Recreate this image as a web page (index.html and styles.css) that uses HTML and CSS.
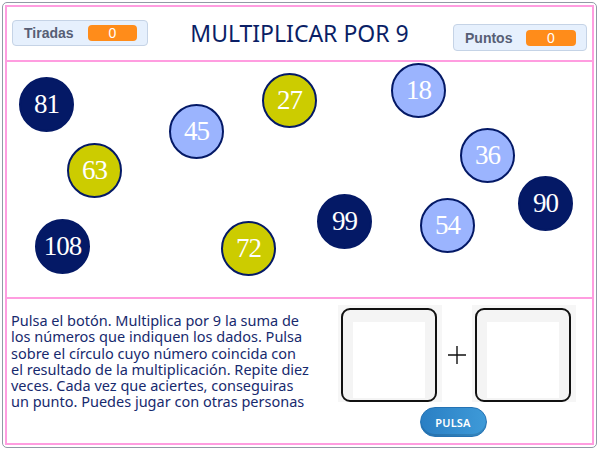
FILE: index.html
```
<!DOCTYPE html>
<html lang="es">
<head>
<meta charset="utf-8">
<title>Multiplicar por 9</title>
<link rel="stylesheet" href="styles.css">
</head>
<body>
<div class="frame">
  <div class="inner">
    <header class="header">
      <div class="monitor monitor-left">
        <span class="monitor-label">Tiradas</span>
        <span class="monitor-value">0</span>
      </div>
      <h1 class="title">MULTIPLICAR POR 9</h1>
      <div class="monitor monitor-right">
        <span class="monitor-label">Puntos</span>
        <span class="monitor-value">0</span>
      </div>
    </header>
    <section class="board">
      <div class="ball dark" style="left:12px;top:15px">81</div>
      <div class="ball yellow" style="left:60px;top:81px">63</div>
      <div class="ball light" style="left:162px;top:42px">45</div>
      <div class="ball yellow" style="left:255px;top:11px">27</div>
      <div class="ball dark" style="left:28px;top:157px">108</div>
      <div class="ball yellow" style="left:214px;top:159px">72</div>
      <div class="ball light" style="left:384px;top:1px">18</div>
      <div class="ball light" style="left:453px;top:66px">36</div>
      <div class="ball dark" style="left:511px;top:114px">90</div>
      <div class="ball dark" style="left:310px;top:132px">99</div>
      <div class="ball light" style="left:413px;top:136px">54</div>
    </section>
    <section class="bottom">
      <p class="instructions">Pulsa el botón. Multiplica por 9 la suma de<br>los números que indiquen los dados. Pulsa<br>sobre el círculo cuyo número coincida con<br>el resultado de la multiplicación. Repite diez<br>veces. Cada vez que aciertes, conseguiras<br>un punto. Puedes jugar con otras personas</p>
      <div class="play">
        <div class="dice-row">
          <div class="die"><div class="die-face"><div class="die-inner"></div></div></div>
          <svg class="plus" width="20" height="20" viewBox="0 0 20 20"><path d="M10 1V19M1 10H19" stroke="#111" stroke-width="1.4" fill="none"/></svg>
          <div class="die"><div class="die-face"><div class="die-inner"></div></div></div>
        </div>
        <button class="pulsa">PULSA</button>
      </div>
    </section>
  </div>
</div>
</body>
</html>
```
FILE: styles.css
```
* { box-sizing: border-box; }
html, body { margin: 0; padding: 0; background: #ffffff; }
body { width: 600px; height: 451px; overflow: hidden; font-family: "Noto Sans", sans-serif; }

.frame {
  margin: 2px 0 0 2px;
  width: 595px;
  height: 446px;
  border: 1px solid #9299a6;
  border-radius: 5px;
  padding: 2px;
}
.inner {
  width: 100%;
  height: 100%;
  border: 2px solid #ff9de0;
  display: flex;
  flex-direction: column;
}

.header {
  height: 55px;
  flex: none;
  border-bottom: 2px solid #ff9de0;
  display: grid;
  grid-template-columns: 1fr auto 1fr;
  align-items: start;
}
.monitor {
  display: flex;
  align-items: center;
  justify-content: space-between;
  background: #e6f0fd;
  border: 1px solid #c5d3e6;
  border-radius: 4px;
  padding: 0 10px 0 11px;
  font-family: "Liberation Sans", Arial, sans-serif;
}
.monitor-left { justify-self: start; margin: 13px 0 0 5px; width: 136px; height: 26px; }
.monitor-right { justify-self: end; margin: 17px 5px 0 0; width: 134px; height: 27px; }
.monitor-label { font-weight: bold; font-size: 14px; color: #575e75; }
.monitor-value {
  background: #ff8c1a;
  color: #ffffff;
  border-radius: 4px;
  height: 16px;
  line-height: 16px;
  text-align: center;
  font-size: 14px;
  width: 49px;
}
.monitor-right .monitor-value { width: 50px; }
.title {
  margin: 14px 0 0 0;
  font-weight: normal;
  font-size: 23px;
  line-height: 24px;
  color: #0b1f66;
  white-space: nowrap;
}

.board {
  height: 237px;
  flex: none;
  position: relative;
  border-bottom: 2px solid #ff9de0;
}
.ball {
  position: absolute;
  width: 55px;
  height: 55px;
  border-radius: 50%;
  border: 2px solid #041966;
  color: #ffffff;
  font-family: "Liberation Serif", serif;
  font-size: 27px;
  line-height: 51px;
  text-align: center;
  letter-spacing: -1px;
}
.dark { background: #041966; }
.yellow { background: #cccc00; }
.light { background: #9bb4fe; }

.bottom {
  flex: 1;
  display: flex;
}
.instructions {
  margin: 0;
  width: 330px;
  padding: 13px 0 0 4px;
  font-size: 14.5px;
  line-height: 16.3px;
  color: #172a6e;
  white-space: nowrap;
}
.play {
  padding-top: 6px;
  display: flex;
  flex-direction: column;
  align-items: center;
  width: 240px;
}
.dice-row {
  display: flex;
  align-items: center;
  gap: 5px;
}
.die {
  width: 104px;
  height: 97px;
  background: #f6f6f6;
  padding: 3px 6px 0 3px;
}
.die-face {
  width: 96px;
  height: 94px;
  border: 2px solid #111111;
  border-radius: 9px;
  background: #f4f4f4;
  padding: 12px 10px 2px 10px;
}
.die-inner {
  width: 100%;
  height: 100%;
  background: #ffffff;
}
.plus { flex: none; margin-top: 2px; }
.pulsa {
  margin: 5px 8px 0 0;
  width: 67px;
  height: 30px;
  border-radius: 15px;
  border: 1px solid #2573b4;
  background: linear-gradient(to right, #2a7fc4, #3e9ad8);
  box-shadow: inset 0 -2px 0 rgba(0,0,0,0.12);
  color: #ffffff;
  font-family: "Noto Sans", sans-serif;
  font-size: 11px;
  font-weight: 600;
  padding: 0;
  letter-spacing: 0.2px;
}
```
